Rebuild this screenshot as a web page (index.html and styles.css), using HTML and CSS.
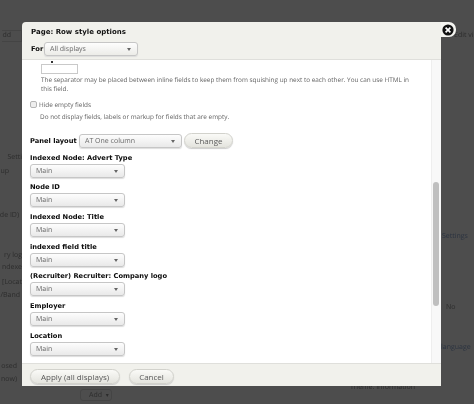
FILE: index.html
```html
<!DOCTYPE html>
<html lang="en">
<head>
    <meta charset="UTF-8">
    <meta name="viewport" content="width=device-width, initial-scale=1.0">
    <title>Row style options</title>
    <link rel="stylesheet" href="styles.css">
</head>
<body>
    <div class="page">
        <div class="back-left">
            <span class="back-btn">dd</span>
            <span class="back-text settings">Setti</span>
            <span class="back-text p-row">up</span>
            <span class="back-text node-id">de ID)</span>
            <span class="back-text logo">ry log</span>
            <span class="back-text indexed">ndexe</span>
            <span class="back-text locat">[Locat</span>
            <span class="back-text band">/Band</span>
            <span class="back-text closed">osed</span>
            <span class="back-text now">now)</span>
        </div>
        <div class="back-middle">
            <span class="back-btn add">Add <span class="add-arrow">▾</span></span>
            <span class="back-text theme">Theme: Information</span>
        </div>
        <div class="back-right">
            <span class="back-text edit">Edit vi</span>
            <span class="back-text right-settings">Settings</span>
            <span class="back-text no">No</span>
            <span class="back-text language">language</span>
        </div>
    </div>

    <div class="dialog">
        <div class="dialog-head">
            <h1>Page: Row style options</h1>
            <div class="for-row">
                <label class="for-label">For</label>
                <div class="select for-select">All displays</div>
            </div>
        </div>
        <div class="dialog-body">
            <div class="scroll-content">
                <div class="req-mark"></div>
                <input class="text-input" type="text">
                <p class="help">The separator may be placed between inline fields to keep them from squishing up next to each other. You can use HTML in this field.</p>
                <div class="check-row">
                    <span class="checkbox"></span>
                    <span>Hide empty fields</span>
                </div>
                <p class="help hide-help">Do not display fields, labels or markup for fields that are empty.</p>
                <div class="panel-row">
                    <label class="panel-label">Panel layout</label>
                    <div class="select panel-select">AT One column</div>
                    <button class="btn change" type="button">Change</button>
                </div>
                <div class="field">
                    <label>Indexed Node: Advert Type</label>
                    <div class="select">Main</div>
                </div>
                <div class="field">
                    <label>Node ID</label>
                    <div class="select">Main</div>
                </div>
                <div class="field">
                    <label>Indexed Node: Title</label>
                    <div class="select">Main</div>
                </div>
                <div class="field">
                    <label>indexed field title</label>
                    <div class="select">Main</div>
                </div>
                <div class="field">
                    <label>(Recruiter) Recruiter: Company logo</label>
                    <div class="select">Main</div>
                </div>
                <div class="field">
                    <label>Employer</label>
                    <div class="select">Main</div>
                </div>
                <div class="field">
                    <label>Location</label>
                    <div class="select">Main</div>
                </div>
            </div>
            <div class="scrollbar"><div class="thumb"></div></div>
        </div>
        <div class="dialog-foot">
            <button class="btn apply" type="button">Apply (all displays)</button>
            <button class="btn cancel" type="button">Cancel</button>
        </div>
        <div class="close">
            <svg width="12" height="12" viewBox="0 0 12 12">
                <circle cx="6" cy="6" r="5.6" fill="#111"/>
                <path d="M3.6 3.6 8.4 8.4M8.4 3.6 3.6 8.4" stroke="#fff" stroke-width="1.7"/>
            </svg>
        </div>
    </div>
</body>
</html>
```

FILE: styles.css
```css
html, body {
    margin: 0;
    height: 100%;
    overflow: hidden;
    background: #4d4d4d;
}
body {
    position: relative;
    width: 474px;
    height: 404px;
    font-family: "Open Sans", "Liberation Sans", sans-serif;
    text-rendering: geometricPrecision;
    filter: blur(0.45px);
}
.page {
    display: grid;
    grid-template-columns: 22px 419px 33px;
    height: 404px;
    font-size: 7px;
    color: #2c2c2c;
}
.back-left {
    display: flex;
    flex-direction: column;
    align-items: flex-end;
    padding-top: 30px;
}
.back-text {
    line-height: 10px;
    white-space: nowrap;
}
.back-btn {
    box-sizing: border-box;
    height: 12px;
    line-height: 10px;
    padding-right: 10px;
    border: 1px solid #444;
    border-left: 0;
}
.settings {
    margin-top: 111px;
}
.p-row {
    margin-top: 4px;
    margin-right: 13px;
}
.node-id {
    margin-top: 34px;
    margin-right: 3px;
}
.logo {
    margin-top: 30px;
}
.indexed {
    margin-top: 2px;
}
.locat {
    margin-top: 5px;
}
.band {
    margin-top: 3px;
    margin-right: 2px;
}
.closed {
    margin-top: 61px;
    margin-right: 5px;
}
.now {
    margin-top: 3px;
    margin-right: 5px;
}
.back-middle {
    display: flex;
    align-items: flex-start;
    padding: 383px 0 0 58px;
    gap: 238px;
}
.add {
    flex: none;
    width: 32px;
    margin-top: 6px;
    padding: 0 0 0 8px;
    border: 1px solid #444;
    border-radius: 3px;
    white-space: nowrap;
}
.add-arrow {
    font-size: 6px;
    margin-left: 2px;
}
.back-right {
    display: flex;
    flex-direction: column;
    align-items: flex-start;
    padding: 31px 0 0 13px;
}
.right-settings {
    margin-top: 191px;
    margin-left: -12px;
    color: #2b3340;
}
.no {
    margin-top: 61px;
    margin-left: -8px;
}
.language {
    margin-top: 30px;
    margin-left: -13px;
    color: #2b3340;
}

.dialog {
    position: absolute;
    left: 22px;
    top: 22px;
    width: 419px;
    height: 364px;
    display: flex;
    flex-direction: column;
    background: #f1f1ec;
    border-radius: 4px 0 0 0;
}
.dialog-head {
    height: 38px;
    flex: none;
    padding: 3px 0 0 9px;
    box-sizing: border-box;
    border-bottom: 1px solid #dfdfdb;
}
.dialog-head h1 {
    margin: 0;
    font-family: "DejaVu Sans", sans-serif;
    font-size: 7px;
    line-height: 15px;
    font-weight: 700;
    color: #111;
}
.for-row {
    display: flex;
    align-items: center;
    margin-top: 2px;
}
label {
    font-family: "DejaVu Sans", sans-serif;
    font-size: 6.7px;
    font-weight: 700;
    color: #0a0a0a;
}
.for-label {
    width: 13px;
}
.select {
    position: relative;
    box-sizing: border-box;
    width: 95px;
    height: 14px;
    padding-left: 5px;
    border: 1px solid #c6c6c6;
    border-radius: 3px;
    background: linear-gradient(#fdfdfd, #e9e9e9);
    box-shadow: 0 1px 1px #ddd;
    font-size: 7px;
    line-height: 13px;
    color: #666;
}
.select::after {
    content: "";
    position: absolute;
    right: 6px;
    top: 5px;
    border-left: 2px solid transparent;
    border-right: 2px solid transparent;
    border-top: 3px solid #666;
}
.for-select {
    width: 94px;
    background: linear-gradient(#fdfdfd, #ecece8);
}
.dialog-body {
    flex: 1;
    display: flex;
    min-height: 0;
    background: #fff;
}
.scroll-content {
    flex: 1;
    overflow: hidden;
    padding-left: 8px;
    font-size: 6.4px;
    color: #5f5f5f;
}
.req-mark {
    width: 2px;
    height: 2px;
    margin: 1px 0 1px 21px;
    background: #333;
}
.text-input {
    display: block;
    box-sizing: border-box;
    width: 37px;
    height: 10px;
    margin: 0 0 0 11px;
    border: 1px solid #c9c9c9;
    background: #fff;
}
.help {
    margin: 2px 0 0 11px;
    width: 376px;
    line-height: 8.5px;
}
.check-row {
    display: flex;
    align-items: center;
    gap: 2px;
    height: 10px;
    margin-top: 6px;
}
.checkbox {
    box-sizing: border-box;
    width: 7px;
    height: 7px;
    border: 1px solid #b5b5b5;
    border-radius: 2px;
    background: #eee;
}
.hide-help {
    margin-top: 4px;
    margin-left: 10px;
}
.panel-row {
    display: flex;
    align-items: center;
    height: 14px;
    margin-top: 12px;
}
.panel-label {
    width: 49px;
}
.panel-select {
    width: 103px;
    margin-right: 2px;
}
.btn {
    box-sizing: border-box;
    height: 15px;
    padding: 0;
    border: 1px solid #d2d2cc;
    border-radius: 8px;
    background: linear-gradient(#fafaf7, #e4e4de);
    box-shadow: 0 1px 1px #ccc;
    font-family: "Open Sans", "Liberation Sans", sans-serif;
    font-size: 8px;
    color: #5a5a5a;
}
.change {
    width: 49px;
}
.field {
    display: flex;
    flex-direction: column;
    align-items: flex-start;
    height: 29.7px;
}
.panel-row + .field {
    margin-top: 4px;
}
.field label {
    line-height: 12px;
}
.scrollbar {
    flex: none;
    width: 10px;
    background: #f8f8f8;
    border-left: 1px solid #eee;
    box-sizing: border-box;
}
.thumb {
    width: 6px;
    height: 124px;
    margin: 122px 0 0 1px;
    border-radius: 3px;
    background: #bfbfbf;
}
.dialog-foot {
    display: flex;
    align-items: center;
    gap: 9px;
    flex: none;
    height: 23px;
    padding: 2px 0 0 8px;
    box-sizing: border-box;
    border-top: 1px solid #dfdfdb;
}
.apply {
    width: 90px;
}
.cancel {
    width: 45px;
}
.close {
    position: absolute;
    left: 100%;
    top: 0;
    width: 15px;
    height: 15px;
    display: flex;
    align-items: center;
    padding-left: 1px;
    box-sizing: border-box;
    border-radius: 0 7px 7px 0;
    background: #f5f5f1;
}
```
